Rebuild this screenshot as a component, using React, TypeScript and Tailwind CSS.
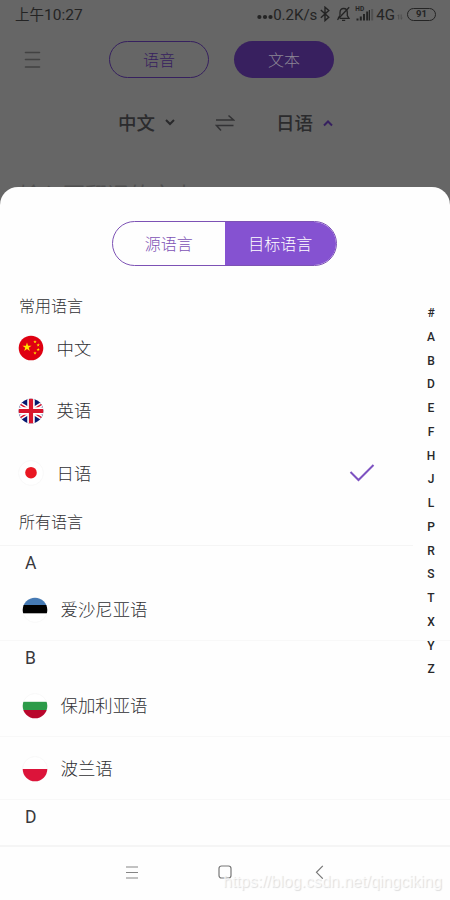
import type { ReactNode } from "react";

const indexLetters = [
  "#", "A", "B", "D", "E", "F", "H", "J",
  "L", "P", "R", "S", "T", "X", "Y", "Z",
];

type FlagProps = {
  children: ReactNode;
  id: string;
};

const Flag = ({ children, id }: FlagProps) => {
  return (
    <svg width="26" height="26" viewBox="0 0 26 26" className="shrink-0">
      <clipPath id={id}>
        <circle cx="13" cy="13" r="12.3" />
      </clipPath>
      <circle cx="13" cy="13" r="12.4" fill="#fff" stroke="#f6f6f6" strokeWidth="0.8" />
      <g clipPath={`url(#${id})`}>{children}</g>
    </svg>
  );
};

const star = "0,-1 .225,-.309 .951,-.309 .363,.118 .588,.809 0,.382 -.588,.809 -.363,.118 -.951,-.309 -.225,-.309";

const ChinaFlag = () => (
  <Flag id="cn">
    <rect width="26" height="26" fill="#df0011" />
    <g fill="#ffe600">
      <polygon points={star} transform="translate(9 12.2) scale(4.8)" />
      <polygon points={star} transform="translate(17 6.800) scale(1.800)" />
      <polygon points={star} transform="translate(20.200 10) scale(1.800)" />
      <polygon points={star} transform="translate(20.200 14.600) scale(1.800)" />
      <polygon points={star} transform="translate(17 18) scale(1.800)" />
    </g>
  </Flag>
);

const UkFlag = () => (
  <Flag id="uk">
    <rect width="26" height="26" fill="#06186f" />
    <path d="M-3 3L29 23M29 3L-3 23" stroke="#fff" strokeWidth="4.600" />
    <path d="M-3 3L29 23M29 3L-3 23" stroke="#d8142c" strokeWidth="1.500" />
    <path d="M13 0V26M0 13H26" stroke="#fff" strokeWidth="7.500" />
    <path d="M13 0V26M0 13H26" stroke="#d8142c" strokeWidth="4.200" />
  </Flag>
);

const JapanFlag = () => (
  <Flag id="jp">
    <circle cx="13" cy="12.700" r="5.800" fill="#e91722" />
  </Flag>
);

const EstoniaFlag = () => (
  <Flag id="ee">
    <rect width="26" height="9" fill="#457ab4" />
    <rect y="8" width="26" height="8.300" fill="#000" />
  </Flag>
);

const BulgariaFlag = () => (
  <Flag id="bg">
    <rect y="8.800" width="26" height="8.400" fill="#2c9b49" />
    <rect y="17" width="26" height="9" fill="#b9072c" />
  </Flag>
);

const PolandFlag = () => (
  <Flag id="pl">
    <rect y="13" width="26" height="13" fill="#dc143a" />
  </Flag>
);

const StatusBar = () => {
  return (
    <div className="flex h-[30px] items-center justify-between pl-[15px] pr-[14px] text-[#242424]">
      <span className="pt-px text-[15.500px] leading-none">
        <span className="text-[14.500px]">上午</span>10:27
      </span>

      <div className="flex items-center">
        <svg width="16" height="6" viewBox="0 0 16 6" fill="#242424" className="mt-1">
          <circle cx="2.400" cy="3" r="2.100" />
          <circle cx="8" cy="3" r="2.100" />
          <circle cx="13.500" cy="3" r="2.100" />
        </svg>
        <span className="text-[15px] leading-none">0.2K/s</span>

        {/* Bluetooth, muted bell, signal */}
        <svg width="12" height="16" viewBox="0 0 12 16" fill="none" stroke="#242424" strokeWidth="1.400" className="-mt-[2px] ml-[2px]">
          <path d="M1.800 4L9.800 11.200L6 14.600V1.200L9.800 4.600L1.800 11.800" />
        </svg>
        <svg width="15" height="16" viewBox="0 0 15 16" fill="none" stroke="#242424" strokeWidth="1.300" className="-mt-[2px] ml-[5px]">
          <path d="M4 9V6.500C4 3.800 5.500 2.500 7.600 2.500C9.800 2.500 11.300 3.800 11.300 6.500V9.500L13 12.400H4M2.200 12.400L4 9.400M6 14.400H9.200M13.200 1.200L1.400 13.800" />
        </svg>
        <div className="relative -mt-[2px] ml-[4px] h-4 w-[19px]">
          <span className="absolute left-0 top-0 text-[6.500px] font-bold leading-none">HD</span>
          <svg width="19" height="16" viewBox="0 0 19 16" fill="#242424">
            <path d="M1.500 12.500h2v2h-2zM4.800 10.500h2v4h-2zM8 8h2v6.500h-2zM11.200 5.500h2v9h-2z" />
            <path d="M13.800 4h1.200v10.500h-1.200z" />
            <path d="M16.200 3h2v11.500h-2z" fill="#515151" />
          </svg>
        </div>
        <span className="ml-[2px] text-[15px] leading-none">4G</span>
        <svg width="6" height="6" viewBox="0 0 6 6" fill="none" stroke="#484848" strokeWidth="0.800" className="ml-[2px] mt-1">
          <path d="M1.700 5.500V.8L.6 2M4.200 .5V5.200L5.400 4" />
        </svg>
        <span className="-mt-[2px] ml-[4px] flex h-[13px] w-[29px] items-center justify-center rounded-full border-[1.500px] border-[#242424] text-[9.500px] font-bold leading-none">
          91
        </span>
      </div>
    </div>
  );
};

const Header = () => {
  return (
    <header className="h-[210px] overflow-hidden bg-[#666666]">
      <StatusBar />

      <div className="flex items-center pt-[11px]">
        <svg width="18" height="18" viewBox="0 0 18 18" stroke="#424242" strokeWidth="1.600" className="ml-[24px]">
          <path d="M1.500 1.500H15.500M1.500 8.500H15.500M1.500 16H15.500" strokeLinecap="round" />
        </svg>
        <button className="ml-[67px] h-[37px] w-[100px] rounded-full border-[1.500px] border-[#36205f] pt-[2px] text-base font-light leading-none text-[#36205f]">
          语音
        </button>
        <button className="ml-[25px] h-[37px] w-[100px] rounded-full bg-[#38205f] pt-[2px] text-base font-light leading-none text-[#8c8695]">
          文本
        </button>
      </div>

      <div className="mt-[30px] flex h-[30px] items-center pl-[118px] text-[18.500px] font-medium leading-none text-[#2b2b2d]">
        <span className="pt-[2px]">中文</span>
        <svg width="12" height="9" viewBox="0 0 12 9" fill="none" stroke="#29292b" strokeWidth="2" className="-mt-[2px] ml-[9px]">
          <path d="M2 2L6 6L10 2" />
        </svg>
        <svg width="20" height="18" viewBox="0 0 20 18" fill="none" stroke="#333335" strokeWidth="1.500" className="-mt-px ml-[39px]">
          <path d="M1 6H18.500L13.500 1.500M18.500 11.500H1.500L6 16.500" />
        </svg>
        <span className="ml-[41px] pt-[2px]">日语</span>
        <svg width="12" height="9" viewBox="0 0 12 9" fill="none" stroke="#36205f" strokeWidth="2" className="ml-[9px]">
          <path d="M2 6.500L6 2.500L10 6.500" />
        </svg>
      </div>

      <p className="mt-[47px] pl-[19px] text-[22px] leading-none text-[#505050]">
        输入要翻译的文本
      </p>
    </header>
  );
};

type LanguageRowProps = {
  flag: ReactNode;
  name: string;
  className: string;
  selected?: boolean;
};

const LanguageRow = ({ flag, name, className, selected }: LanguageRowProps) => {
  return (
    <div className={`flex items-center text-[17.400px] font-light leading-none text-[#303034] ${className}`}>
      {flag}
      <span className="ml-[12.500px] pt-[2px]">{name}</span>
      {selected && (
        <svg width="26" height="20" viewBox="0 0 26 20" fill="none" stroke="#7d52c1" strokeWidth="2" className="ml-auto mr-[75px]">
          <path d="M1.500 9L9.500 17L24.500 2" />
        </svg>
      )}
    </div>
  );
};

const LanguageList = () => {
  return (
    <div className="pt-[28px]">
      <h2 className="flex h-[23px] items-center pl-[19px] pt-[3px] text-base font-light leading-none text-[#303034]">
        常用语言
      </h2>
      <LanguageRow flag={<ChinaFlag />} name="中文" className="h-[62.500px] pl-[18px]" />
      <LanguageRow flag={<UkFlag />} name="英语" className="h-[62.500px] pl-[18px]" />
      <LanguageRow flag={<JapanFlag />} name="日语" className="h-[62.500px] pl-[18px]" selected />

      <h2 className="flex h-[40.500px] items-center pb-[3px] pl-[19px] text-base font-light leading-none text-[#303034]">
        所有语言
      </h2>

      <section className="mr-[37px] h-[95px] border-t border-[#f5f5f5]">
        <h3 className="flex h-[34px] items-center pl-[25px] pt-[2px] text-[17.500px] leading-none text-[#38383c]">A</h3>
        <LanguageRow flag={<EstoniaFlag />} name="爱沙尼亚语" className="h-[59px] pl-[22px]" />
      </section>
      <section className="h-[96px] border-t border-[#f8f8f8]">
        <h3 className="flex h-[35px] items-center pl-[25px] pt-px text-[17.500px] leading-none text-[#38383c]">B</h3>
        <LanguageRow flag={<BulgariaFlag />} name="保加利亚语" className="h-[60px] pl-[22px]" />
      </section>
      <div className="h-[63px] border-t border-[#f8f8f8]">
        <LanguageRow flag={<PolandFlag />} name="波兰语" className="h-[62px] pl-[22px] pt-px" />
      </div>
      <section className="h-[46px] border-t border-[#f8f8f8]">
        <h3 className="flex h-[35px] items-center pl-[25px] pt-px text-[17.500px] leading-none text-[#38383c]">D</h3>
      </section>
    </div>
  );
};

const NavBar = () => {
  return (
    <nav className="relative flex h-[55px] items-start border-t-2 border-[#f5f5f5] pl-[125px] pt-[18px]">
      <svg width="14" height="14" viewBox="0 0 14 14" stroke="#858585" strokeWidth="1.200">
        <path d="M1 2H13M1 7.500H13M1 13H13" />
      </svg>
      <svg width="14" height="14" viewBox="0 0 14 14" fill="none" stroke="#777" strokeWidth="1.200" className="ml-[79px]">
        <rect x="1" y="1" width="12" height="12" rx="2.500" />
      </svg>
      <svg width="9" height="14" viewBox="0 0 9 14" fill="none" stroke="#777" strokeWidth="1.200" className="ml-[83px]">
        <path d="M7.800 .8L1.500 7.300L7.800 13.700" />
      </svg>
      <span className="absolute left-[223px] top-[27px] whitespace-nowrap font-['Liberation_Sans',sans-serif] text-[16px] leading-none text-white/70 [text-shadow:1px_1px_1px_#dcdcdc]">
        https://blog.csdn.net/qingciking
      </span>
    </nav>
  );
};

const App = () => {
  return (
    <div className="h-[900px] w-[450px] overflow-hidden bg-[#666666] font-[Roboto,'Noto_Sans_CJK_SC',sans-serif]">
      <Header />

      <main className="relative -mt-[23px] h-[713px] rounded-t-[18px] bg-[#fefefe] pt-[34px]">
        <div className="ml-[112px] flex h-[45px] w-[225px] overflow-hidden rounded-full border border-[#7d52b5] text-base font-light leading-none">
          <button className="w-1/2 pt-[2px] text-[#7d52b5]">源语言</button>
          <button className="w-1/2 bg-[#8552d1] pt-[2px] text-white">目标语言</button>
        </div>

        <LanguageList />
        <NavBar />

        {/* Alphabet index */}
        <ul className="absolute right-[9px] top-[115px] w-5 text-center text-xs font-medium text-[#28282a]">
          {indexLetters.map((letter) => (
            <li key={letter} className="h-[23.770px] leading-[23.770px]">
              {letter}
            </li>
          ))}
        </ul>
      </main>
    </div>
  );
};

export default App;
